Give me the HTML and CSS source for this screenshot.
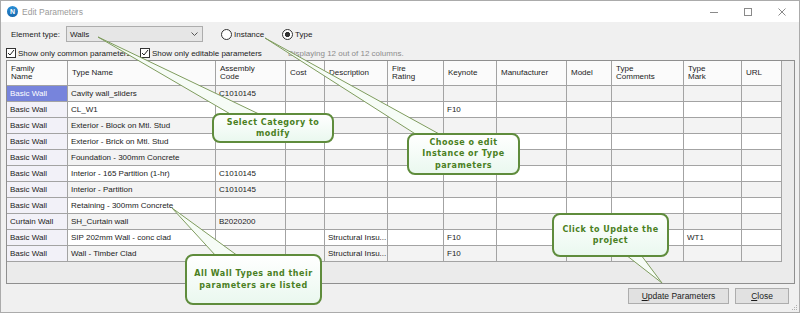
FILE: index.html
```html
<!DOCTYPE html>
<html lang="en">

<head>
    <meta charset="UTF-8">
    <meta name="viewport" content="width=device-width, initial-scale=1.0">
    <link rel="stylesheet" href="styles.css">
    <title>Edit Parameters</title>
</head>

<body>
    <div class="window">
        <div class="titlebar">
            <span class="app-icon">N</span>
            <span class="title">Edit Parameters</span>
            <div class="controls">
                <span class="ctl"><svg width="10" height="10" viewBox="0 0 10 10"><path d="M1 5.5h8" stroke="#8a8a8a" fill="none"/></svg></span>
                <span class="ctl"><svg width="10" height="10" viewBox="0 0 10 10"><rect x="1.5" y="1.5" width="7" height="7" stroke="#8a8a8a" fill="none"/></svg></span>
                <span class="ctl"><svg width="10" height="10" viewBox="0 0 10 10"><path d="M1.5 1.5l7 7M8.5 1.5l-7 7" stroke="#8a8a8a" fill="none"/></svg></span>
            </div>
        </div>

        <div class="content">
            <div class="toolbar">
                <span class="field-label">Element type:</span>
                <div class="combo">
                    <span>Walls</span>
                    <svg width="7" height="4" viewBox="0 0 7 4"><path d="M0.5 0.5l3 3 3-3" stroke="#555" fill="none"/></svg>
                </div>
                <label class="radio radio-instance"><span class="radio-mark"></span>Instance</label>
                <label class="radio checked"><span class="radio-mark"></span>Type</label>
            </div>

            <div class="options">
                <label class="check check-common">
                    <span class="check-box"><svg width="8" height="8" viewBox="0 0 8 8"><path d="M1 4l2 2 4-5" stroke="#222" fill="none"/></svg></span>
                    Show only common parameters
                </label>
                <label class="check check-editable">
                    <span class="check-box"><svg width="8" height="8" viewBox="0 0 8 8"><path d="M1 4l2 2 4-5" stroke="#222" fill="none"/></svg></span>
                    Show only editable parameters
                </label>
                <span class="col-count">Displaying 12 out of 12 columns.</span>
            </div>

            <div class="grid-wrap">
                <div class="grid">
                    <div class="row">
                        <div class="cell head">Family<br>Name</div>
                        <div class="cell head">Type Name</div>
                        <div class="cell head">Assembly<br>Code</div>
                        <div class="cell head">Cost</div>
                        <div class="cell head">Description</div>
                        <div class="cell head">Fire<br>Rating</div>
                        <div class="cell head">Keynote</div>
                        <div class="cell head">Manufacturer</div>
                        <div class="cell head">Model</div>
                        <div class="cell head">Type<br>Comments</div>
                        <div class="cell head">Type<br>Mark</div>
                        <div class="cell head">URL</div>
                    </div>

                    <div class="row alt">
                        <div class="cell family selected">Basic Wall</div>
                        <div class="cell">Cavity wall_sliders</div>
                        <div class="cell">C1010145</div>
                        <div class="cell"></div><div class="cell"></div><div class="cell"></div><div class="cell"></div>
                        <div class="cell"></div><div class="cell"></div><div class="cell"></div><div class="cell"></div><div class="cell"></div>
                    </div>
                    <div class="row">
                        <div class="cell family">Basic Wall</div>
                        <div class="cell">CL_W1</div>
                        <div class="cell"></div><div class="cell"></div><div class="cell"></div><div class="cell"></div>
                        <div class="cell">F10</div>
                        <div class="cell"></div><div class="cell"></div><div class="cell"></div><div class="cell"></div><div class="cell"></div>
                    </div>
                    <div class="row alt">
                        <div class="cell family">Basic Wall</div>
                        <div class="cell">Exterior - Block on Mtl. Stud</div>
                        <div class="cell"></div><div class="cell"></div><div class="cell"></div><div class="cell"></div><div class="cell"></div>
                        <div class="cell"></div><div class="cell"></div><div class="cell"></div><div class="cell"></div><div class="cell"></div>
                    </div>
                    <div class="row">
                        <div class="cell family">Basic Wall</div>
                        <div class="cell">Exterior - Brick on Mtl. Stud</div>
                        <div class="cell"></div><div class="cell"></div><div class="cell"></div><div class="cell"></div><div class="cell"></div>
                        <div class="cell"></div><div class="cell"></div><div class="cell"></div><div class="cell"></div><div class="cell"></div>
                    </div>
                    <div class="row alt">
                        <div class="cell family">Basic Wall</div>
                        <div class="cell">Foundation - 300mm Concrete</div>
                        <div class="cell"></div><div class="cell"></div><div class="cell"></div><div class="cell"></div><div class="cell"></div>
                        <div class="cell"></div><div class="cell"></div><div class="cell"></div><div class="cell"></div><div class="cell"></div>
                    </div>
                    <div class="row">
                        <div class="cell family">Basic Wall</div>
                        <div class="cell">Interior - 165 Partition (1-hr)</div>
                        <div class="cell">C1010145</div>
                        <div class="cell"></div><div class="cell"></div><div class="cell"></div><div class="cell"></div>
                        <div class="cell"></div><div class="cell"></div><div class="cell"></div><div class="cell"></div><div class="cell"></div>
                    </div>
                    <div class="row alt">
                        <div class="cell family">Basic Wall</div>
                        <div class="cell">Interior - Partition</div>
                        <div class="cell">C1010145</div>
                        <div class="cell"></div><div class="cell"></div><div class="cell"></div><div class="cell"></div>
                        <div class="cell"></div><div class="cell"></div><div class="cell"></div><div class="cell"></div><div class="cell"></div>
                    </div>
                    <div class="row">
                        <div class="cell family">Basic Wall</div>
                        <div class="cell">Retaining - 300mm Concrete</div>
                        <div class="cell"></div><div class="cell"></div><div class="cell"></div><div class="cell"></div><div class="cell"></div>
                        <div class="cell"></div><div class="cell"></div><div class="cell"></div><div class="cell"></div><div class="cell"></div>
                    </div>
                    <div class="row alt">
                        <div class="cell family">Curtain Wall</div>
                        <div class="cell">SH_Curtain wall</div>
                        <div class="cell">B2020200</div>
                        <div class="cell"></div><div class="cell"></div><div class="cell"></div><div class="cell"></div>
                        <div class="cell"></div><div class="cell"></div><div class="cell"></div><div class="cell"></div><div class="cell"></div>
                    </div>
                    <div class="row">
                        <div class="cell family">Basic Wall</div>
                        <div class="cell">SIP 202mm Wall - conc clad</div>
                        <div class="cell"></div><div class="cell"></div>
                        <div class="cell">Structural Insu...</div>
                        <div class="cell"></div>
                        <div class="cell">F10</div>
                        <div class="cell"></div><div class="cell"></div><div class="cell"></div>
                        <div class="cell">WT1</div>
                        <div class="cell"></div>
                    </div>
                    <div class="row alt">
                        <div class="cell family">Basic Wall</div>
                        <div class="cell">Wall - Timber Clad</div>
                        <div class="cell"></div><div class="cell"></div>
                        <div class="cell">Structural Insu...</div>
                        <div class="cell"></div>
                        <div class="cell">F10</div>
                        <div class="cell"></div><div class="cell"></div><div class="cell"></div><div class="cell"></div><div class="cell"></div>
                    </div>
                </div>
            </div>

            <div class="footer">
                <button class="btn btn-update"><u>U</u>pdate Parameters</button>
                <button class="btn btn-close"><u>C</u>lose</button>
            </div>
        </div>
    </div>

    <!-- callout pointers, drawn under the notes -->
    <svg class="tails" width="800" height="313" viewBox="0 0 800 313">
        <g fill="#f6fcf6" stroke="#7f9c5e" stroke-width="1">
            <polygon points="98,37 232,115 261,115"/>
            <polygon points="265,38 417,135 441,135"/>
            <polygon points="172,208 216,256 238,256"/>
            <polygon points="662,283 626,255 641,255"/>
        </g>
    </svg>

    <div class="note note-category">Select Category to<br>modify</div>
    <div class="note note-instance">Choose o edit<br>Instance or Type<br>parameters</div>
    <div class="note note-types">All Wall Types and their<br>parameters are listed</div>
    <div class="note note-update">Click to Update the<br>project</div>

    <svg class="grip" width="6" height="6" viewBox="0 0 6 6">
        <g fill="#b0b0b0">
            <rect x="4" y="0" width="1" height="1"/>
            <rect x="2" y="2" width="1" height="1"/><rect x="4" y="2" width="1" height="1"/>
            <rect x="0" y="4" width="1" height="1"/><rect x="2" y="4" width="1" height="1"/><rect x="4" y="4" width="1" height="1"/>
        </g>
    </svg>
</body>

</html>
```

FILE: styles.css
```css
/* General */
body {
    margin: 0;
    position: relative;
    width: 800px;
    height: 313px;
    overflow: hidden;
    font-family: 'Liberation Sans', Arial, sans-serif;
    font-size: 8px;
    color: #1b1b1b;
    background: #ffffff;
}

.window {
    width: 800px;
    height: 313px;
    box-sizing: border-box;
    border: 1px solid #ababab;
    background: #f0f0f0;
    display: flex;
    flex-direction: column;
}

/* Title bar */
.titlebar {
    height: 21px;
    flex-shrink: 0;
    background: #ffffff;
    display: flex;
    align-items: center;
    padding-left: 6px;
}

.app-icon {
    width: 11px;
    height: 11px;
    border-radius: 50%;
    background: linear-gradient(#2b8fd6, #1668ad);
    color: #ffffff;
    font-weight: bold;
    font-size: 7px;
    display: flex;
    align-items: center;
    justify-content: center;
}

.title {
    margin-left: 4px;
    font-size: 8.5px;
    color: #9a9a9a;
}

.controls {
    margin-left: auto;
    height: 100%;
    display: flex;
}

.ctl {
    width: 34px;
    display: flex;
    align-items: center;
    justify-content: center;
}

/* Body */
.content {
    flex: 1;
    display: flex;
    flex-direction: column;
    padding: 0 4px 0 5px;
}

.toolbar {
    height: 24px;
    display: flex;
    align-items: center;
    padding-left: 5px;
}

.field-label {
    width: 55px;
}

.combo {
    width: 137px;
    height: 16px;
    box-sizing: border-box;
    border: 1px solid #adadad;
    background: #e6e6e6;
    display: flex;
    align-items: center;
    justify-content: space-between;
    padding: 0 4px 0 3px;
}

.radio {
    display: flex;
    align-items: center;
    gap: 2px;
}

.radio-instance {
    margin-left: 18px;
    width: 61px;
}

.radio-mark {
    width: 11px;
    height: 11px;
    box-sizing: border-box;
    border: 1px solid #333333;
    border-radius: 50%;
    background: #ffffff;
}

.radio.checked .radio-mark {
    background: radial-gradient(circle, #333333 0 2.3px, #ffffff 2.9px);
}

.options {
    height: 14px;
    display: flex;
    align-items: center;
}

.check {
    display: flex;
    align-items: center;
    gap: 2px;
}

.check-common {
    width: 134px;
}

.check-editable {
    width: 148px;
}

.check-box {
    width: 10px;
    height: 10px;
    box-sizing: border-box;
    border: 1px solid #333333;
    background: #ffffff;
    display: flex;
    align-items: center;
    justify-content: center;
}

.col-count {
    color: #8c8c8c;
}

/* Grid */
.grid-wrap {
    width: 789px;
    height: 224px;
    box-sizing: border-box;
    border: 1px solid #8f8f8f;
    background: #ebebeb;
}

.grid {
    width: 775px;
    display: grid;
    grid-template-columns: 61px 148px 70px 39px 63px 56px 53px 70px 45px 72px 58px 40px;
    background: #ffffff;
}

.row {
    display: contents;
}

.cell {
    height: 16px;
    box-sizing: border-box;
    border-right: 1px solid #a3a3a3;
    border-bottom: 1px solid #a3a3a3;
    padding: 0 3px;
    display: flex;
    align-items: center;
    white-space: nowrap;
    overflow: hidden;
}

.row.alt .cell {
    background: #f3f3f3;
}

.cell.head {
    height: 25px;
    padding-left: 4px;
    line-height: 8.5px;
    background: #fbfbfb;
}

.row .cell.family {
    background: #f2f1f8;
}

.row .cell.family.selected {
    background: #7784dc;
    color: #ffffff;
}

/* Buttons */
.footer {
    display: flex;
    justify-content: flex-end;
    gap: 6px;
    margin-top: 4px;
    padding-right: 6px;
}

.btn {
    height: 16px;
    padding: 0;
    font-family: inherit;
    font-size: 8.5px;
    color: #1b1b1b;
    background: #e1e1e1;
    border: 1px solid #adadad;
}

.btn-update {
    width: 101px;
}

.btn-close {
    width: 54px;
}

/* Callouts */
.tails {
    position: absolute;
    left: 0;
    top: 0;
    pointer-events: none;
}

.note {
    position: absolute;
    box-sizing: border-box;
    border: 2px solid #5f8c3c;
    border-radius: 8px;
    background: linear-gradient(#ffffff, #eaf8ef);
    color: #4a8022;
    font-family: 'DejaVu Sans', Verdana, sans-serif;
    font-weight: bold;
    font-size: 8px;
    letter-spacing: 0.5px;
    line-height: 11.5px;
    text-align: center;
    display: flex;
    align-items: center;
    justify-content: center;
}

.note-category {
    left: 212px;
    top: 113px;
    width: 122px;
    height: 30px;
}

.note-instance {
    left: 407px;
    top: 133px;
    width: 113px;
    height: 42px;
}

.note-types {
    left: 185px;
    top: 254px;
    width: 137px;
    height: 51px;
}

.note-update {
    left: 552px;
    top: 213px;
    width: 117px;
    height: 44px;
}

.grip {
    position: absolute;
    left: 792px;
    top: 305px;
}
```
